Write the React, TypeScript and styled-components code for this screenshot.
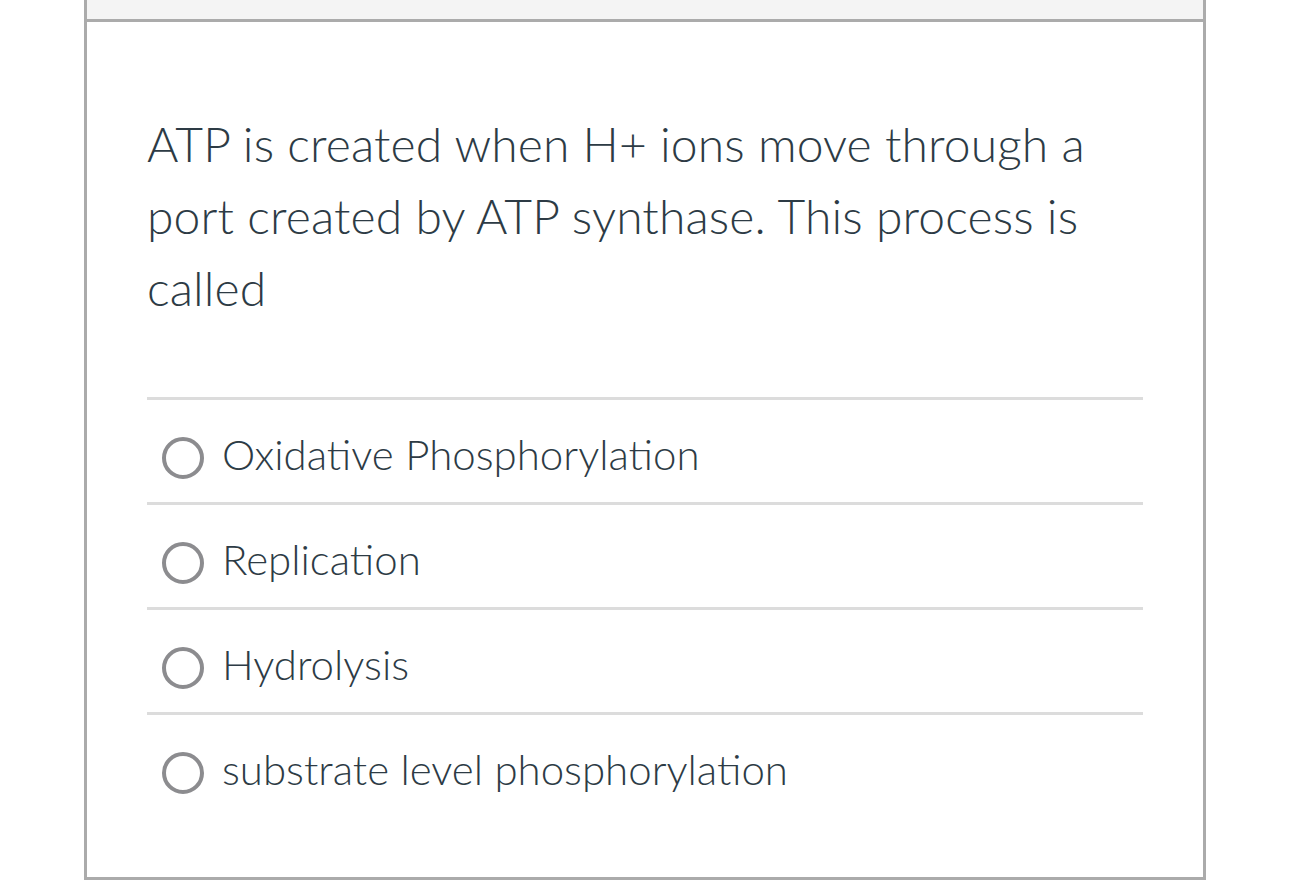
import React from 'react';
import styled, { createGlobalStyle } from 'styled-components';

const GlobalStyle = createGlobalStyle`
  html, body {
    margin: 0;
    padding: 0;
    background: #ffffff;
  }
  body {
    font-family: Lato, "Open Sans", "Liberation Sans", sans-serif;
    color: #2d3b45;
  }
`;

const Page = styled.div`
  padding-left: 84px;
  width: 1122px;
`;

const Card = styled.div`
  box-sizing: border-box;
  width: 1122px;
  border: 3px solid #ababab;
  border-top: none;
  background: #ffffff;
`;

const Header = styled.div`
  height: 19px;
  background: #f4f4f4;
  border-bottom: 3px solid #ababab;
`;

const Body = styled.div`
  padding: 86px 60px 60px 60px;
`;

const Question = styled.p`
  margin: 0;
  font-size: 48px;
  line-height: 72px;
  letter-spacing: 0.12px;
  font-weight: 300;
  color: #2d3b45;
`;

const Answers = styled.div`
  margin-top: 73px;
  display: flex;
  flex-direction: column;
`;

const Row = styled.label`
  box-sizing: border-box;
  height: 105px;
  border-top: 3px solid #dcdcdc;
  padding-top: 13px;
  display: flex;
  align-items: center;
`;

const Radio = styled.span`
  box-sizing: border-box;
  width: 42px;
  height: 42px;
  margin-left: 15px;
  border: 4px solid #8c8c8f;
  border-radius: 50%;
  background: #ffffff;
  flex-shrink: 0;
`;

const Label = styled.span`
  margin-left: 18px;
  margin-top: -7px;
  font-size: 42px;
  line-height: 1;
  font-weight: 300;
  color: #2d3b45;
`;

const answers = [
  'Oxidative Phosphorylation',
  'Replication',
  'Hydrolysis',
  'substrate level phosphorylation',
];

export default function App() {
  return (
    <>
      <GlobalStyle />
      <Page>
        <Card>
          <Header />
          <Body>
            <Question>
              ATP is created when H+ ions move through a port created by ATP synthase. This process is called
            </Question>
            <Answers>
              {answers.map((a) => (
                <Row key={a}>
                  <Radio />
                  <Label>{a}</Label>
                </Row>
              ))}
            </Answers>
          </Body>
        </Card>
      </Page>
    </>
  );
}
